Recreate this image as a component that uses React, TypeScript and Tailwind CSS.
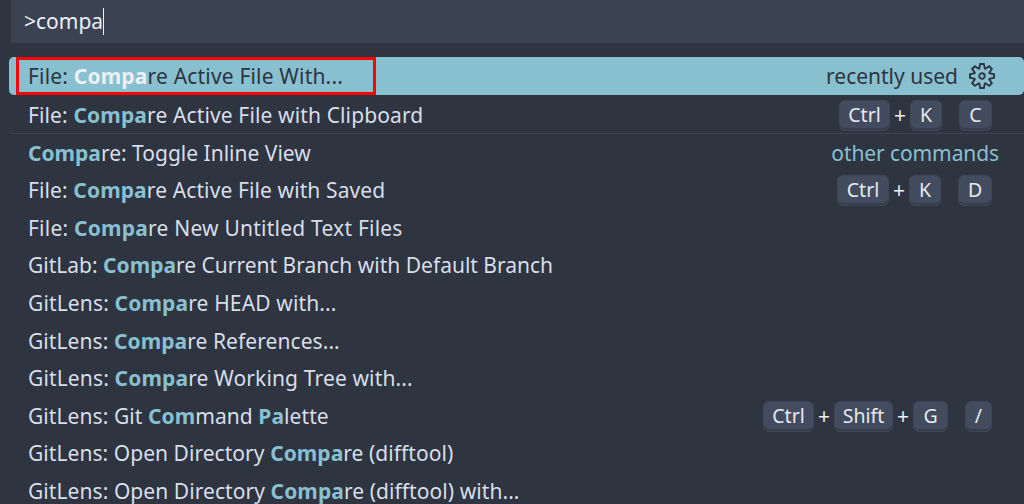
import { VscSettingsGear } from "react-icons/vsc";

type Part = { t: string; hl?: boolean };
type Key = { label: string; w: string };

type Row = {
  parts: Part[];
  track?: string;
  keys?: Key[][];
  right?: string;
  border?: boolean;
};

const ctrl: Key = { label: "Ctrl", w: "w-[51px]" };
const k: Key = { label: "K", w: "w-[32px]" };

const rows: Row[] = [
  {
    parts: [{ t: "File: " }, { t: "Compa", hl: true }, { t: "re Active File with Clipboard" }],
    track: "tracking-[0.13px]",
    keys: [[ctrl, k], [{ label: "C", w: "w-[33px]" }]],
  },
  {
    parts: [{ t: "Compa", hl: true }, { t: "re: Toggle Inline View" }],
    right: "other commands",
    border: true,
  },
  {
    parts: [{ t: "File: " }, { t: "Compa", hl: true }, { t: "re Active File with Saved" }],
    track: "tracking-[0.11px]",
    keys: [[{ label: "Ctrl", w: "w-[52px]" }, k], [{ label: "D", w: "w-[34px]" }]],
  },
  {
    parts: [{ t: "File: " }, { t: "Compa", hl: true }, { t: "re New Untitled Text Files" }],
    track: "tracking-[0.22px]",
  },
  { parts: [{ t: "GitLab: " }, { t: "Compa", hl: true }, { t: "re Current Branch with Default Branch" }] },
  { parts: [{ t: "GitLens: " }, { t: "Compa", hl: true }, { t: "re HEAD with..." }], track: "tracking-[0.14px]" },
  { parts: [{ t: "GitLens: " }, { t: "Compa", hl: true }, { t: "re References..." }], track: "tracking-[0.07px]" },
  { parts: [{ t: "GitLens: " }, { t: "Compa", hl: true }, { t: "re Working Tree with..." }], track: "tracking-[0.14px]" },
  {
    parts: [
      { t: "GitLens: Git " },
      { t: "Com", hl: true },
      { t: "mand " },
      { t: "Pa", hl: true },
      { t: "lette" },
    ],
    track: "tracking-[0.07px]",
    keys: [
      [ctrl, { label: "Shift", w: "w-[59px]" }, { label: "G", w: "w-[35px]" }],
      [{ label: "/", w: "w-[27px]" }],
    ],
  },
  {
    parts: [{ t: "GitLens: Open Directory " }, { t: "Compa", hl: true }, { t: "re (difftool)" }],
    track: "tracking-[0.05px]",
  },
  {
    parts: [{ t: "GitLens: Open Directory " }, { t: "Compa", hl: true }, { t: "re (difftool) with..." }],
    track: "tracking-[0.07px]",
  },
];

function Kbd({ item }: { item: Key }) {
  return (
    <span
      className={`flex h-[31px] items-center justify-center rounded-[6px] border border-[#3f4757] bg-[#434c5e] pb-[2px] text-[19.5px] text-[#e5e9f0] shadow-[inset_0_-2px_0_#363d4c] ${item.w}`}
    >
      {item.label}
    </span>
  );
}

function Chords({ keys }: { keys: Key[][] }) {
  return (
    <div className="flex items-center gap-[17px]">
      {keys.map((chord, i) => (
        <div key={i} className="flex items-center">
          {chord.map((key, j) => (
            <div key={j} className="flex items-center">
              {j > 0 && <span className="w-[20px] text-center text-[21px] text-[#eceff4]">+</span>}
              <Kbd item={key} />
            </div>
          ))}
        </div>
      ))}
    </div>
  );
}

export default function App() {
  return (
    <div className="h-[504px] w-[1024px] overflow-hidden bg-[#2e3440] font-['Noto_Sans',sans-serif] text-[21px] text-[#d8dee9]">
      <div className="pl-[11px]">
        <div className="flex h-[43px] items-center rounded-bl-[3px] bg-[#3b4252] pl-[13px] text-[#eceff4]">
          <span>&gt;compa</span>
          <span className="h-[27px] w-px bg-[#eceff4]" />
        </div>
      </div>

      <div className="relative mt-[14px] ml-[9px] flex h-[38px] items-center justify-between rounded-[5px] bg-[#88c0d0] pl-[19px] pr-[29px] pt-[2px] text-[#2e3440]">
        <span className="tracking-[0.18px]">
          File: <span className="font-bold text-[#eceff4]">Compa</span>re Active File With...
        </span>
        <div className="flex items-center gap-[11px]">
          <span>recently used</span>
          <VscSettingsGear size={26} className="-mt-[2px]" />
        </div>
        <div className="absolute left-[7px] top-0 h-[38px] w-[360px] border-[3px] border-[#ff0000]" />
      </div>

      {rows.map((row, i) => (
        <div
          key={i}
          className={
            row.border
              ? "ml-[11px] flex h-[37.6px] items-center justify-between border-t border-[#3b4252] pl-[17px] pr-[25px] pt-[4px]"
              : "ml-[11px] flex h-[37.6px] items-center justify-between pl-[17px] pr-[32px] pt-[4px]"
          }
        >
          <span className={`whitespace-nowrap ${row.track ?? ""}`}>
            {row.parts.map((p, j) =>
              p.hl ? (
                <span key={j} className="font-bold text-[#88c0d0]">
                  {p.t}
                </span>
              ) : (
                <span key={j}>{p.t}</span>
              )
            )}
          </span>
          {row.keys && <Chords keys={row.keys} />}
          {row.right && <span className="tracking-[-0.1px] text-[#88c0d0]">{row.right}</span>}
        </div>
      ))}
    </div>
  );
}
